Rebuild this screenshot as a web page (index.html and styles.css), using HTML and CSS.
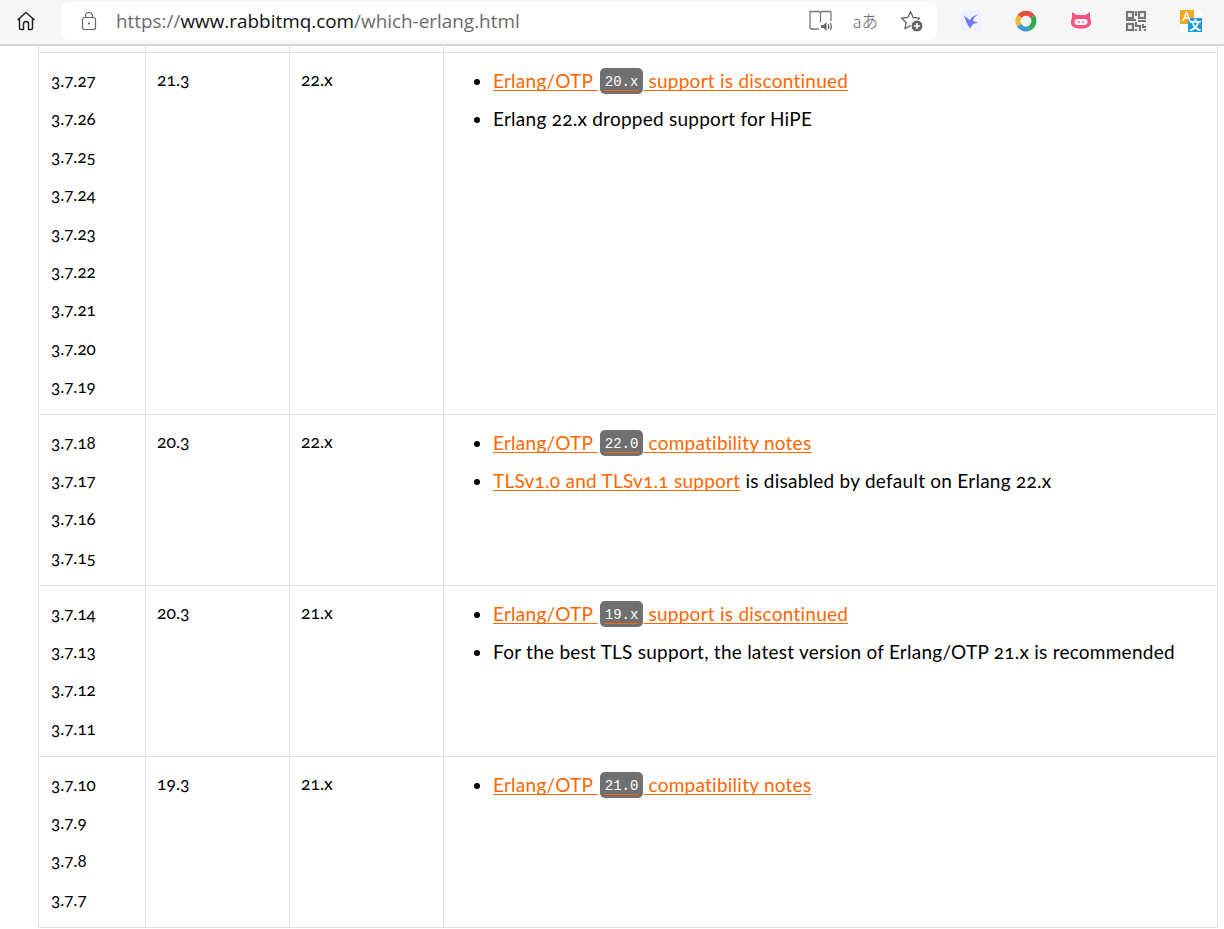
FILE: index.html
```html
<!DOCTYPE html>
<html lang="en">
<head>
<meta charset="utf-8">
<title>Which Erlang</title>
<link rel="stylesheet" href="styles.css">
</head>
<body>
<header class="toolbar">
  <svg class="home" width="24" height="24" viewBox="0 0 24 24"><path d="M3.500 11 12 3.500 20.500 11M5.500 9.500V19a1.500 1.500 0 0 0 1.500 1.500h2.500V15a2.500 2.500 0 0 1 5 0v5.500H17a1.500 1.500 0 0 0 1.500-1.500V9.500" fill="none" stroke="#222" stroke-width="1.500" stroke-linejoin="round"/></svg>
  <div class="address">
    <svg class="lock" width="18" height="20" viewBox="0 0 18 20"><rect x="2.500" y="6.500" width="13" height="12" rx="2" fill="none" stroke="#666" stroke-width="1.200"/><path d="M5.500 6.500V5a3.500 3.500 0 0 1 7 0v1.500" fill="none" stroke="#666" stroke-width="1.200"/><circle cx="9" cy="12.500" r="1" fill="#555"/></svg>
    <div class="url">https://<b>www.rabbitmq.com</b>/which-erlang.html</div>
    <div class="addr-icons">
      <svg class="ico-book" width="24" height="22" viewBox="0 0 24 22"><path d="M10 19H2.500A1.500 1.500 0 0 1 1 17.500V1.500h8.500a2 2 0 0 1 2 1.500 2 2 0 0 1 2-1.500H21a1 1 0 0 1 1 1V11M11.500 3v9" fill="none" stroke="#777" stroke-width="1.300"/><path d="M12 15h2.500l3-3v9l-3-3H12z" fill="#666"/><path d="M19.200 14q1.300 2.500 0 5M21.500 13q1.800 3.500 0 7" fill="none" stroke="#666" stroke-width="1.100"/></svg>
      <span class="translate">aあ</span>
      <svg class="ico-star" width="24" height="24" viewBox="0 0 24 24"><path d="M10.500 2.500l2.700 6 6.300.7-4.700 4.300 1.300 6.300-5.600-3.200-5.600 3.200 1.300-6.300L1.500 9.200l6.300-.7z" fill="none" stroke="#666" stroke-width="1.300" stroke-linejoin="round"/><circle cx="17" cy="17" r="6" fill="#666" stroke="#fff" stroke-width="1"/><path d="M17 14v6M14 17h6" stroke="#fff" stroke-width="1.500"/></svg>
    </div>
  </div>
  <div class="extensions">
    <svg width="22" height="22" viewBox="0 0 22 22"><rect width="20" height="20" x="1" y="1" rx="2" fill="#eef0fb"/><path d="M19 4 13 6.500 9.500 10 4 5.500l2.500 7L10 18.500l3-4.500 5-1.500-5-1.500 1-3.500z" fill="#6d7cf5"/></svg>
    <svg width="22" height="22" viewBox="0 0 22 22"><g fill="none" stroke-width="5"><path d="M4.500 6.500A8 8 0 0 1 17.500 6.500" stroke="#e0503c"/><path d="M17.500 6.500a8 8 0 0 1-3.500 11.900" stroke="#34a853"/><path d="M14 18.400A8 8 0 0 1 4 15" stroke="#3f9ad0"/><path d="M4 15A8 8 0 0 1 4.500 6.500" stroke="#f5b92f"/></g></svg>
    <svg width="22" height="22" viewBox="0 0 22 22"><path d="M2 2l4.500 3h9L20 2v6a9 6.500 0 0 1 1 4c0 5-4 6.500-10 6.500S1 17 1 12a9 6.500 0 0 1 1-4z" fill="#f4527f"/><rect x="4.500" y="9" width="13" height="6" rx="3" fill="#fff"/><circle cx="9" cy="12" r=".9" fill="#f4527f"/><circle cx="13" cy="12" r=".9" fill="#f4527f"/></svg>
    <svg width="22" height="22" viewBox="0 0 22 22"><g fill="none" stroke="#777" stroke-width="2.200"><rect x="2" y="2" width="6" height="6"/><rect x="14" y="2" width="6" height="6"/><rect x="2" y="14" width="6" height="6"/><path d="M11 1v5M11 10H1M13 11h8M11 12v4h4v5M18 14v3h3M11 19v2M20 19v2"/></g></svg>
    <svg width="22" height="22" viewBox="0 0 22 22"><rect width="22" height="22" fill="#fff"/><rect x="0" y="0" width="14" height="14" fill="#f7a81b"/><rect x="8" y="8" width="14" height="14" fill="#1c9be6"/><path d="M3 11 6.500 2.500 10 11M4.500 8h4" fill="none" stroke="#fff" stroke-width="1.600"/><text class="wen" x="15" y="19.500">文</text></svg>
  </div>
</header>
<main class="content">
<table class="versions">
  <tbody>
    <tr class="stub"><td></td><td></td><td></td><td></td></tr>
    <tr>
      <td class="vers"><p>3.7.27</p><p>3.7.26</p><p>3.7.25</p><p>3.7.24</p><p>3.7.23</p><p>3.7.22</p><p>3.7.21</p><p>3.7.20</p><p>3.7.19</p></td>
      <td>21.3</td><td>22.x</td>
      <td class="notes"><ul>
        <li><a href="#">Erlang/OTP <code>20.x</code> support is discontinued</a></li>
        <li>Erlang 22.x dropped support for HiPE</li>
      </ul></td>
    </tr>
    <tr>
      <td class="vers"><p>3.7.18</p><p>3.7.17</p><p>3.7.16</p><p>3.7.15</p></td>
      <td>20.3</td><td>22.x</td>
      <td class="notes"><ul>
        <li><a href="#">Erlang/OTP <code>22.0</code> compatibility notes</a></li>
        <li><a href="#">TLSv1.0 and TLSv1.1 support</a> is disabled by default on Erlang 22.x</li>
      </ul></td>
    </tr>
    <tr>
      <td class="vers"><p>3.7.14</p><p>3.7.13</p><p>3.7.12</p><p>3.7.11</p></td>
      <td>20.3</td><td>21.x</td>
      <td class="notes"><ul>
        <li><a href="#">Erlang/OTP <code>19.x</code> support is discontinued</a></li>
        <li>For the best TLS support, the latest version of Erlang/OTP 21.x is recommended</li>
      </ul></td>
    </tr>
    <tr>
      <td class="vers"><p>3.7.10</p><p>3.7.9</p><p>3.7.8</p><p>3.7.7</p></td>
      <td>19.3</td><td>21.x</td>
      <td class="notes"><ul>
        <li><a href="#">Erlang/OTP <code>21.0</code> compatibility notes</a></li>
      </ul></td>
    </tr>
  </tbody>
</table>
</main>
</body>
</html>
```

FILE: styles.css
```css
* { box-sizing: border-box; }
html, body { margin: 0; padding: 0; height: 929px; overflow: hidden; background: #fff; }
body { font-family: "Lato", "Open Sans", sans-serif; color: #000; }
.toolbar {
  height: 46px;
  background: #f6f6f6;
  border-bottom: 2px solid #d8d8d8;
  display: flex;
  align-items: center;
  padding: 0 0 3px 14px;
}
.home { flex: none; }
.address {
  margin-left: 23px;
  width: 876px;
  height: 38px;
  background: #fff;
  border-radius: 8px;
  display: flex;
  align-items: center;
  padding: 0 13px 0 19px;
}
.lock { flex: none; }
.url { margin-left: 18px; font: 18.900px "Open Sans", sans-serif; color: #6b6b6b; flex: 1; white-space: nowrap; }
.url b { font-weight: 400; color: #111; }
.addr-icons { display: flex; align-items: center; gap: 22px; }
.ico-book { margin-right: -3px; }
.translate { font: 300 16.500px "Noto Sans CJK JP", "Open Sans", sans-serif; color: #666; }
.extensions { display: flex; align-items: center; margin-left: 23px; gap: 33px; }
.wen { font: 700 12px "Noto Sans CJK SC", sans-serif; fill: #fff; text-anchor: middle; }
.content { padding-left: 38px; }
.versions { border-collapse: collapse; width: 1180px; table-layout: fixed; font-size: 17.500px; font-variant-numeric: oldstyle-nums; }
.versions td { border: 1px solid #e0e0e0; vertical-align: top; padding: 16px 11px 0; line-height: 22px; }
.versions td:nth-child(1) { width: 107px; }
.versions td:nth-child(2) { width: 144px; }
.versions td:nth-child(3) { width: 154px; }
.versions .stub td { padding: 0; height: 6px; border-top: none; }
.versions td.vers { padding: 17px 12px 16px; font-size: 17px; }
.vers p { margin: 0 0 16.300px; }
.vers p:last-child { margin-bottom: 0; }
.versions td.notes { padding-top: 17px; font-size: 19px; letter-spacing: .25px; }
ul { margin: 0; padding: 0 0 0 38px; }
li { margin: 0 0 16px; }
li:last-child { margin-bottom: 0; }
a { color: #ff6600; text-underline-offset: 2px; text-decoration-skip-ink: none; }
code {
  font: 14px "Liberation Mono", monospace;
  line-height: 0;
  vertical-align: 2px;
  margin-left: 2px;
  background: #707070;
  color: #fff;
  border-radius: 5px;
  padding: 6px 5px 4px;
  letter-spacing: 0;
}
```
